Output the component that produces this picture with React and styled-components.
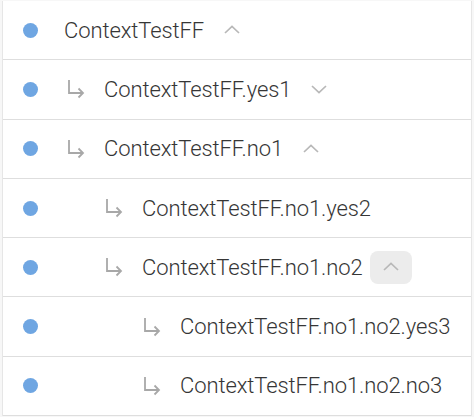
import React from "react";
import styled, { createGlobalStyle } from "styled-components";

const Global = createGlobalStyle`
  html, body { margin: 0; padding: 0; background: #f7f7f7; }
  body { font-family: Roboto, "Liberation Sans", sans-serif; }
`;

const List = styled.div`
  margin: 1px 2px 0 2px;
  background: #fff;
  border-left: 1px solid #e6e6e6;
  border-right: 1px solid #e6e6e6;
`;

const Row = styled.div`
  display: flex;
  align-items: center;
  height: 58.3px;
  border-bottom: 1px solid #dedede;
  padding-left: 20px;
`;

const Dot = styled.span`
  width: 15px;
  height: 15px;
  border-radius: 50%;
  background: #6fa6e2;
  flex: none;
`;

const Body = styled.div`
  display: flex;
  align-items: center;
  margin-left: ${(p) => (p.$level === 0 ? 26 : 28 + p.$level * 38)}px;
`;

const Arrow = styled.svg`
  width: 22px;
  height: 22px;
  margin-left: -39px;
  margin-right: 17px;
  flex: none;
`;

const Label = styled.span`
  font-size: 22px;
  font-weight: 300;
  color: #363636;
  letter-spacing: -0.1px;
`;

const Toggle = styled.span`
  display: flex;
  align-items: center;
  justify-content: center;
  width: 42px;
  height: 33px;
  border-radius: 8px;
  margin-left: 7px;
  background: ${(p) => (p.$active ? "#ececec" : "transparent")};
`;

const ArrowIcon = () => (
  <Arrow viewBox="0 0 22 22" fill="none" stroke="#a8a8a8" strokeWidth="1.8">
    <path d="M4 2 V15 H18" />
    <path d="M13.5 10.5 L18 15 L13.5 19.5" />
  </Arrow>
);

const Chevron = ({ up }) => (
  <svg width="18" height="12" viewBox="0 0 18 12" fill="none" stroke="#b8b8b8" strokeWidth="1.7">
    {up ? <path d="M2 9 L9 2.5 L16 9" /> : <path d="M2 3 L9 9.5 L16 3" />}
  </svg>
);

const items = [
  { label: "ContextTestFF", level: 0, chev: "up" },
  { label: "ContextTestFF.yes1", level: 1, chev: "down" },
  { label: "ContextTestFF.no1", level: 1, chev: "up" },
  { label: "ContextTestFF.no1.yes2", level: 2 },
  { label: "ContextTestFF.no1.no2", level: 2, chev: "up", active: true },
  { label: "ContextTestFF.no1.no2.yes3", level: 3 },
  { label: "ContextTestFF.no1.no2.no3", level: 3 },
];

export default function App() {
  return (
    <>
      <Global />
      <List>
        {items.map((it) => (
          <Row key={it.label}>
            <Dot />
            <Body $level={it.level}>
              {it.level > 0 && <ArrowIcon />}
              <Label>{it.label}</Label>
              {it.chev && (
                <Toggle $active={it.active}>
                  <Chevron up={it.chev === "up"} />
                </Toggle>
              )}
            </Body>
          </Row>
        ))}
      </List>
    </>
  );
}
